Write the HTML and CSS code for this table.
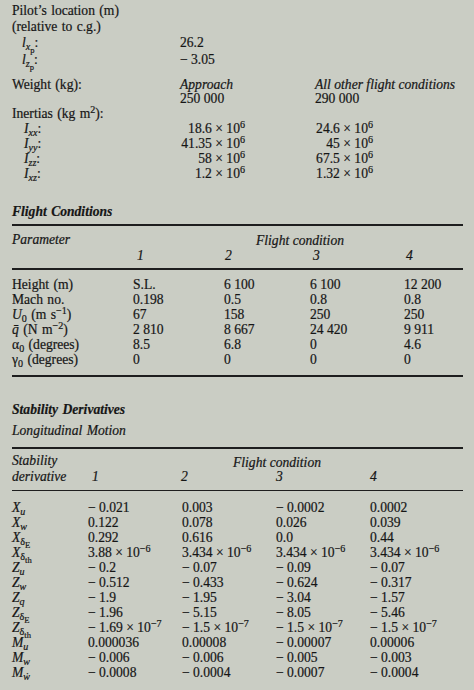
FILE: index.html
```html
<!DOCTYPE html>
<html>
<head>
<meta charset="utf-8">
<link rel="stylesheet" href="styles.css">
</head>
<body>
<div class="page">
  <section class="spec">
    <div class="row r1"><span class="lab">Pilot’s location (m)</span></div>
    <div class="row r2"><span class="lab">(relative to c.g.)</span></div>
    <div class="row r3"><span class="lab ind"><i>l</i><sub><i>x</i><sub>p</sub></sub>:</span><span class="v1">26.2</span></div>
    <div class="row r4"><span class="lab ind"><i>l</i><sub><i>z</i><sub>p</sub></sub>:</span><span class="v1">− 3.05</span></div>
    <div class="row r5"><span class="lab">Weight (kg):</span><span class="v1"><i>Approach</i></span><span class="v2"><i>All other flight conditions</i></span></div>
    <div class="row r6"><span class="lab"></span><span class="v1">250 000</span><span class="v2">290 000</span></div>
    <div class="row r7"><span class="lab">Inertias (kg m<sup>2</sup>):</span></div>
    <div class="row r8"><span class="lab ind2"><i>I<sub>xx</sub></i>:</span><span class="v1"><span class="ra1">18.6 × 10<sup>6</sup></span></span><span class="v2"><span class="ra2">24.6 × 10<sup>6</sup></span></span></div>
    <div class="row r8"><span class="lab ind2"><i>I<sub>yy</sub></i>:</span><span class="v1"><span class="ra1">41.35 × 10<sup>6</sup></span></span><span class="v2"><span class="ra2">45 × 10<sup>6</sup></span></span></div>
    <div class="row r8"><span class="lab ind2"><i>I<sub>zz</sub></i>:</span><span class="v1"><span class="ra1">58 × 10<sup>6</sup></span></span><span class="v2"><span class="ra2">67.5 × 10<sup>6</sup></span></span></div>
    <div class="row r8"><span class="lab ind2"><i>I<sub>xz</sub></i>:</span><span class="v1"><span class="ra1">1.2 × 10<sup>6</sup></span></span><span class="v2"><span class="ra2">1.32 × 10<sup>6</sup></span></span></div>
  </section>

  <h2 class="heading h-fc">Flight Conditions</h2>
  <div class="table fc">
    <div class="rule thick"></div>
    <div class="hdr">
      <div class="hrow top"><span class="c0"><i>Parameter</i></span><span class="span fc-span"><i>Flight condition</i></span></div>
      <div class="hrow nums"><span class="c0"></span><span class="n n1"><i>1</i></span><span class="n n2"><i>2</i></span><span class="n n3"><i>3</i></span><span class="n n4"><i>4</i></span></div>
    </div>
    <div class="rule thin"></div>
    <div class="body">
      <div class="drow"><span>Height (m)</span><span>S.L.</span><span>6 100</span><span>6 100</span><span>12 200</span></div>
      <div class="drow"><span>Mach no.</span><span>0.198</span><span>0.5</span><span>0.8</span><span>0.8</span></div>
      <div class="drow"><span><i>U</i><sub>0</sub> (m s<sup>−1</sup>)</span><span>67</span><span>158</span><span>250</span><span>250</span></div>
      <div class="drow"><span><i>q̄</i> (N m<sup>−2</sup>)</span><span>2 810</span><span>8 667</span><span>24 420</span><span>9 911</span></div>
      <div class="drow"><span>α<sub>0</sub> (degrees)</span><span>8.5</span><span>6.8</span><span>0</span><span>4.6</span></div>
      <div class="drow"><span>γ<sub>0</sub> (degrees)</span><span>0</span><span>0</span><span>0</span><span>0</span></div>
    </div>
    <div class="rule thick bottom"></div>
  </div>

  <h2 class="heading h-sd">Stability Derivatives</h2>
  <h3 class="subheading">Longitudinal Motion</h3>
  <div class="table sd">
    <div class="rule thick"></div>
    <div class="hdr">
      <div class="hrow top"><span class="c0"><i>Stability</i></span><span class="span sd-span"><i>Flight condition</i></span></div>
      <div class="hrow nums"><span class="c0"><i>derivative</i></span><span class="n m1"><i>1</i></span><span class="n m2"><i>2</i></span><span class="n m3"><i>3</i></span><span class="n m4"><i>4</i></span></div>
    </div>
    <div class="rule thin"></div>
    <div class="body">
      <div class="drow"><span><i>X<sub>u</sub></i></span><span>− 0.021</span><span>0.003</span><span>− 0.0002</span><span>0.0002</span></div>
      <div class="drow"><span><i>X<sub>w</sub></i></span><span>0.122</span><span>0.078</span><span>0.026</span><span>0.039</span></div>
      <div class="drow"><span><i>X</i><sub>δ<sub>E</sub></sub></span><span>0.292</span><span>0.616</span><span>0.0</span><span>0.44</span></div>
      <div class="drow"><span><i>X</i><sub>δ<sub>th</sub></sub></span><span>3.88 × 10<sup>−6</sup></span><span>3.434 × 10<sup>−6</sup></span><span>3.434 × 10<sup>−6</sup></span><span>3.434 × 10<sup>−6</sup></span></div>
      <div class="drow"><span><i>Z<sub>u</sub></i></span><span>− 0.2</span><span>− 0.07</span><span>− 0.09</span><span>− 0.07</span></div>
      <div class="drow"><span><i>Z<sub>w</sub></i></span><span>− 0.512</span><span>− 0.433</span><span>− 0.624</span><span>− 0.317</span></div>
      <div class="drow"><span><i>Z<sub>q</sub></i></span><span>− 1.9</span><span>− 1.95</span><span>− 3.04</span><span>− 1.57</span></div>
      <div class="drow"><span><i>Z</i><sub>δ<sub>E</sub></sub></span><span>− 1.96</span><span>− 5.15</span><span>− 8.05</span><span>− 5.46</span></div>
      <div class="drow"><span><i>Z</i><sub>δ<sub>th</sub></sub></span><span>− 1.69 × 10<sup>−7</sup></span><span>− 1.5 × 10<sup>−7</sup></span><span>− 1.5 × 10<sup>−7</sup></span><span>− 1.5 × 10<sup>−7</sup></span></div>
      <div class="drow"><span><i>M<sub>u</sub></i></span><span>0.000036</span><span>0.00008</span><span>− 0.00007</span><span>0.00006</span></div>
      <div class="drow"><span><i>M<sub>w</sub></i></span><span>− 0.006</span><span>− 0.006</span><span>− 0.005</span><span>− 0.003</span></div>
      <div class="drow"><span><i>M<sub>ẇ</sub></i></span><span>− 0.0008</span><span>− 0.0004</span><span>− 0.0007</span><span>− 0.0004</span></div>
    </div>
  </div>
</div>
</body>
</html>
```

FILE: styles.css
```css
html, body {
  margin: 0;
  padding: 0;
  background: #cacdc4;
}
body {
  width: 474px;
  height: 690px;
  overflow: hidden;
  font-family: "Liberation Serif", "Times New Roman", serif;
  font-size: 13.6px;
  color: #161616;
  -webkit-text-stroke: 0.2px #161616;
}
.page {
  padding: 3px 11px 0 12px;
}
.spec .lab, .drow > span:first-child, .heading, .subheading, .c0 {
  word-spacing: 1px;
}
sub, sup {
  font-size: 0.74em;
  line-height: 0;
}
sub { vertical-align: -0.25em; }
sup { vertical-align: 0.45em; }
sub sub { font-size: 0.85em; vertical-align: -0.35em; font-style: normal; }
.spec .row {
  display: grid;
  grid-template-columns: 168px 135px auto;
  line-height: 15px;
  height: 15px;
}
.spec .r2 { height: 16px; margin-top: 1px; }
.spec .r3 { height: 16px; margin-top: 0; }
.spec .r4 { height: 17px; margin-top: 1px; }
.spec .r5 { margin-top: 8px; height: 14px; }
.spec .r6 { height: 15px; }
.spec .r7 { height: 15px; }
.lab { grid-column: 1; white-space: nowrap; }
.v1 { grid-column: 2; white-space: nowrap; }
.v2 { grid-column: 3; white-space: nowrap; }
.ind { padding-left: 10px; }
.ind2 { padding-left: 12px; }
.ra1 { display: inline-block; width: 65px; text-align: right; }
.ra2 { display: inline-block; width: 58px; text-align: right; }

.heading {
  margin: 0;
  font-size: 13.6px;
  font-weight: bold;
  font-style: italic;
  line-height: 15px;
}
.h-fc { margin-top: 23px; }
.subheading {
  margin: 6px 0 0 0;
  font-size: 13.6px;
  font-weight: normal;
  font-style: italic;
  line-height: 15px;
}
.rule {
  background: #1e1e1e;
  width: 451px;
}
.rule.thick { height: 2px; }
.rule.thin { height: 1.5px; }
.fc { margin-top: 5px; }
.fc .hdr { padding: 6px 0 4px; }
.hrow {
  display: grid;
  line-height: 15px;
  height: 16px;
  white-space: nowrap;
}
.fc .hrow, .fc .drow { grid-template-columns: 121px 91px 86px 94px auto; }
.sd .hrow, .sd .drow { grid-template-columns: 76px 94px 94px 94px auto; }
.span { grid-column: 2 / -1; }
.fc-span { padding-left: 123px; padding-top: 1px; }
.sd-span { padding-left: 145px; padding-top: 2px; }
.n1 { padding-left: 4px; }
.n2 { padding-left: 1px; }
.n3 { padding-left: 3px; }
.n4 { padding-left: 2px; }
.m1 { padding-left: 4px; }
.m2 { padding-left: 0; margin-left: -1px; }
.drow {
  display: grid;
  line-height: 15px;
  height: 15px;
  white-space: nowrap;
}
.fc .body { padding: 7px 0 8px; }
.h-sd { margin-top: 25px; }
.sd { margin-top: 9px; }
.sd .hdr { padding: 4px 0 6px; }
.sd .hrow.nums { height: 15px; }
.sd .body { padding: 9px 0 0; }
```
